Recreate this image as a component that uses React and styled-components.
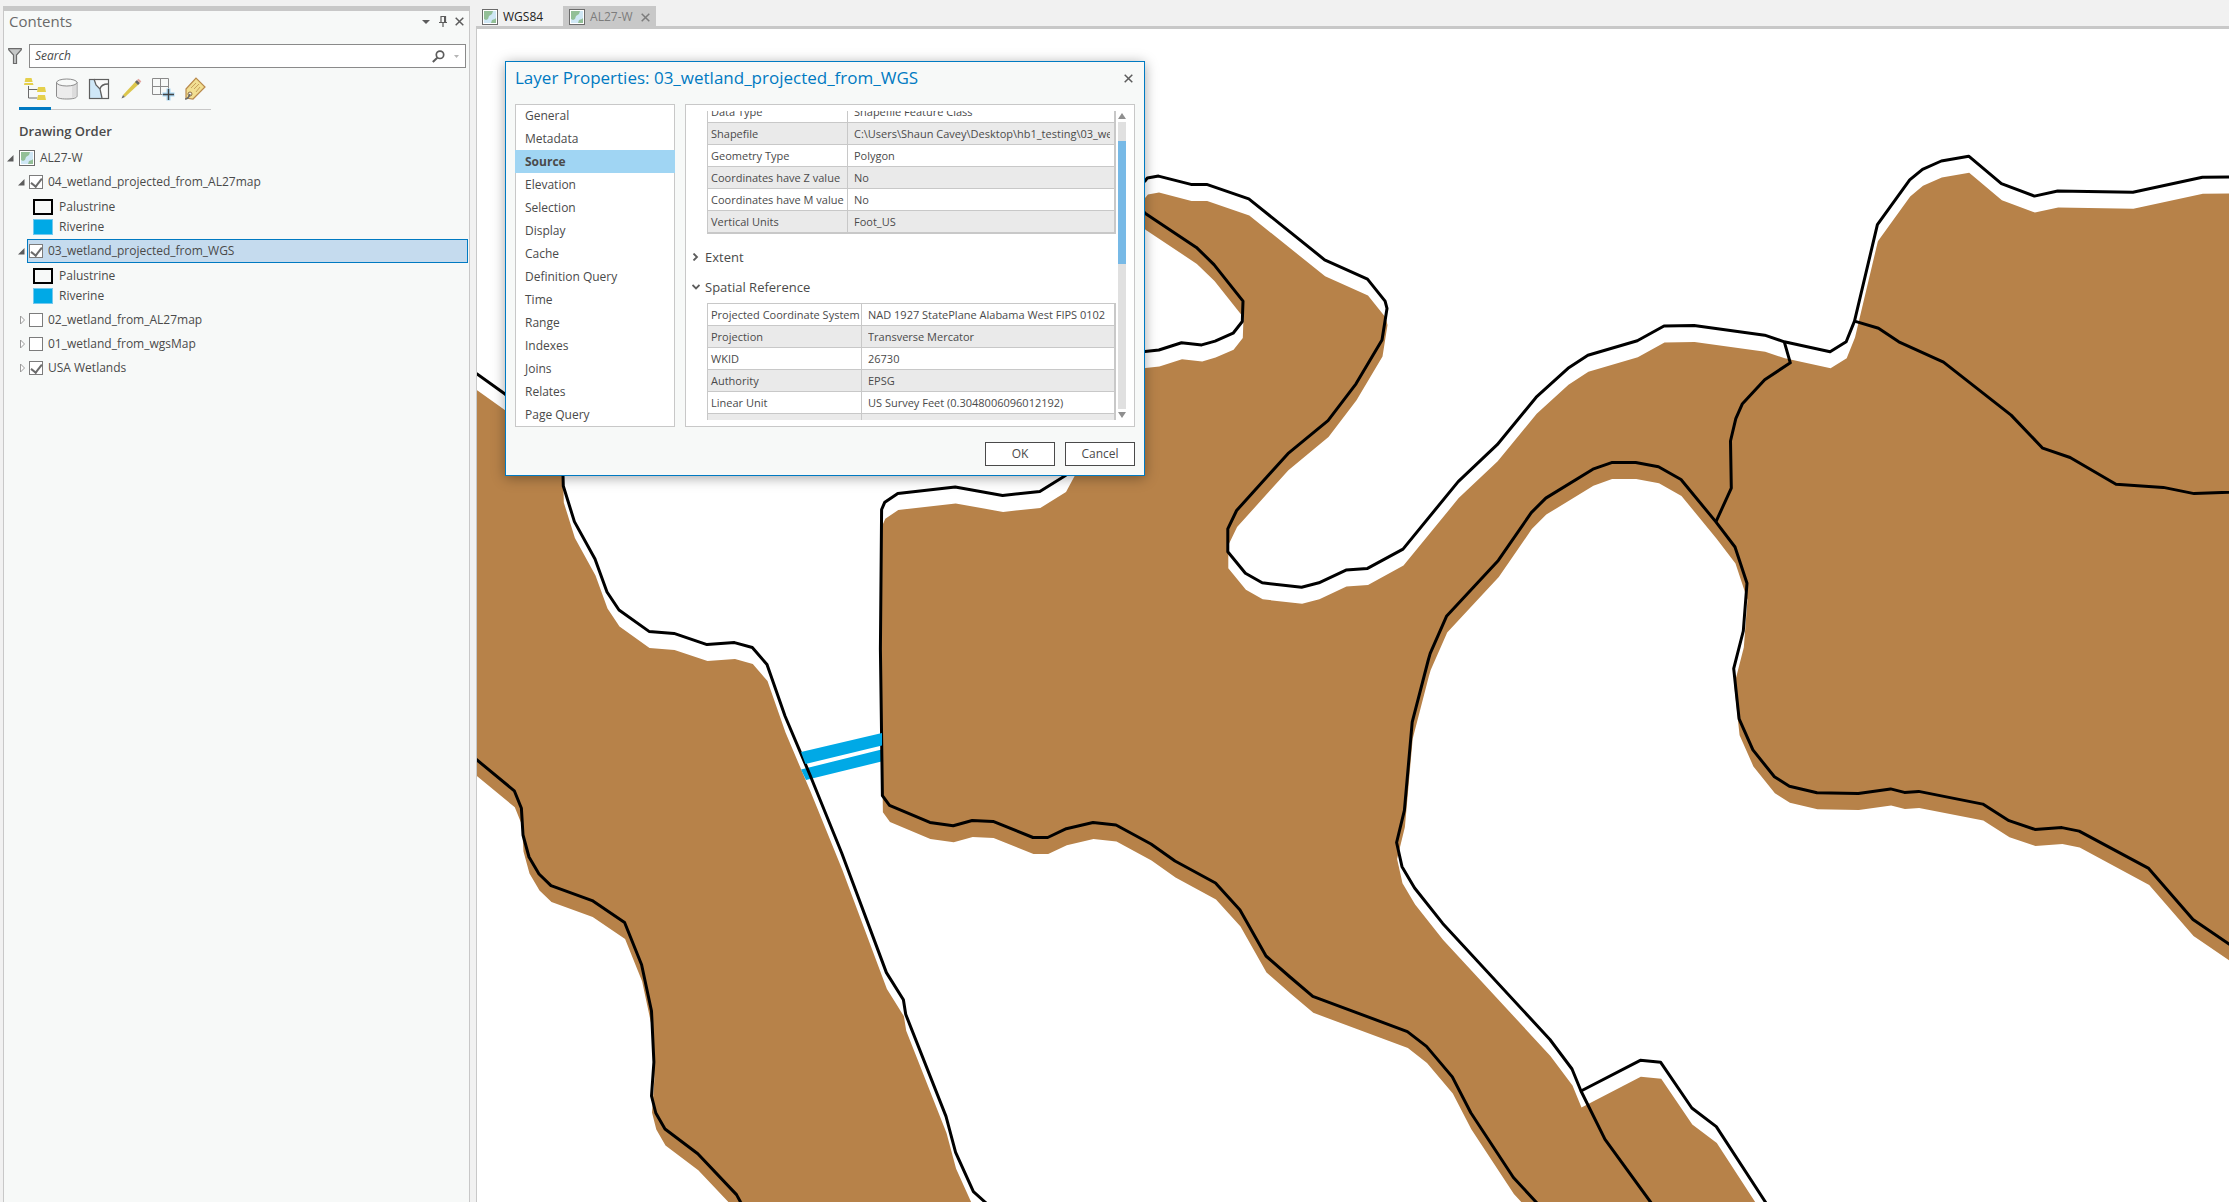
import { useState } from "react";
import styled, { createGlobalStyle } from "styled-components";

const toPoints = (list) => list.map((p) => p.join(",")).join(" ");

const westWetland = [
  [460, 363], [477, 374], [505, 394], [560, 440], [563, 475], [563.3, 486],
  [574.4, 521.6], [595, 559], [607, 592], [619, 610], [649, 631.4], [674, 633.4],
  [707, 644.6], [734.5, 642.6], [752.3, 647.5], [767, 664.5], [785, 716],
  [810, 775], [841.7, 853], [886.4, 972.6], [903.4, 999.8], [905.7, 1014.3],
  [946, 1116.4], [955.6, 1152.3], [973.4, 1191.7], [985, 1202], [1003, 1220],
  [752, 1220], [740.5, 1202], [736.5, 1194.6], [697.8, 1153.8], [665, 1129],
  [655.8, 1113], [651.5, 1096], [653.9, 1062], [651.5, 1011], [641.6, 964.8],
  [624.6, 922.5], [592.2, 900.6], [551, 885.6], [539, 874], [529, 857],
  [523, 835], [521.4, 808.3], [514.3, 790.8], [477, 760], [460, 746],
];

const mainWetland = [
  [1065.5, 475.5], [1039.8, 491.5], [1002.6, 495.4], [955.2, 487], [897.8, 493.4],
  [884.8, 502.2], [881.6, 509.5], [880.4, 649], [882.4, 795.7], [889.5, 805.4],
  [929.9, 822.4], [953.2, 825.8], [972.2, 820.5], [993.1, 821.4], [1033, 837.5],
  [1047.7, 837.5], [1066.3, 828.7], [1093, 822.5], [1116, 825], [1151, 844],
  [1175, 861], [1215.5, 883], [1240, 910], [1266, 956], [1290, 977],
  [1312.8, 996.3], [1407.4, 1031.6], [1426.5, 1046.4], [1452.3, 1076.9],
  [1470.8, 1112.8], [1513.4, 1177.5], [1536, 1202], [1553, 1220], [1777, 1220],
  [1765.4, 1202], [1716.3, 1126.6], [1691.8, 1108], [1660.7, 1062.3],
  [1640.3, 1060.3], [1581, 1091], [1572, 1069], [1549.9, 1039.5],
  [1442.7, 923.4], [1414.6, 888], [1402, 866.7], [1396.6, 842.5],
  [1404.4, 810.4], [1412.2, 722.2], [1428.3, 660], [1430.2, 653.4],
  [1446.7, 615.9], [1498.3, 560.4], [1531.3, 512.6], [1545.8, 498.1],
  [1592.9, 469.2], [1611.6, 462.6], [1635.7, 462.6], [1658.5, 466.8],
  [1681, 479.5], [1715.9, 521.9], [1735, 547], [1747, 583.2], [1743.3, 631],
  [1733.7, 668.6], [1739.1, 718.8], [1752.9, 749.9], [1774.4, 776.8],
  [1789.4, 786.2], [1817, 792.7], [1858.3, 793.4], [1890.6, 788.9],
  [1904.4, 792.4], [1918.7, 791.4], [1982.8, 804.1], [2009, 820.7],
  [2034.9, 829.4], [2061.9, 827.6], [2079.2, 831.1], [2148.7, 868.4],
  [2193, 919.6], [2229, 944], [2260, 966], [2260, 176.8], [2202.4, 177.2],
  [2132.9, 192.3], [2057.7, 191], [2034.4, 196.1], [2001.4, 183.7],
  [1968.7, 156.2], [1941.3, 161], [1922.5, 169.3], [1909.7, 179.9],
  [1877.4, 224.7], [1854.5, 321.1], [1846.2, 341.8], [1830.1, 351.8],
  [1784.3, 341.8], [1764.7, 335.2], [1694.1, 325.6], [1664, 326],
  [1637.3, 340.7], [1587.9, 355.2], [1568, 368.3], [1536.2, 397.2],
  [1497.2, 444.7], [1458.2, 481.6], [1403, 549.1], [1367.5, 568.4],
  [1346, 570.1], [1318.9, 582.8], [1301.6, 587.3], [1262.2, 582.8],
  [1245.4, 573.2], [1227.8, 551.8], [1227.8, 528.8], [1236.6, 510.5],
  [1287.9, 453.7], [1328, 420.6], [1356, 383.8], [1382, 340.1], [1387, 308.4],
  [1385.1, 301.1], [1367.5, 279.1], [1324.6, 259.8], [1248.8, 198.9],
  [1206.7, 184.4], [1191, 184.4], [1158.5, 176.1], [1147.4, 177.9],
  [1145, 181], [1130, 195], [1145, 213.3], [1196.4, 247.4], [1214, 264.6],
  [1243, 301.1], [1242.3, 321.5], [1233.1, 333.2], [1215.1, 341.1],
  [1201.7, 344.9], [1181.5, 342.8], [1158.9, 350], [1145, 351.4],
  [1100, 370], [1083, 443],
];

const innerBorders = [
  [
    [1784.3, 341.8], [1790.3, 362.8], [1764.7, 379.7], [1742.2, 404.1],
    [1735.8, 418.6], [1730.5, 441], [1731.3, 488.1], [1715.9, 521.9],
  ],
  [
    [1854.5, 321.1], [1878.5, 328.3], [1898.8, 341.8], [1943.5, 362.1],
    [2011.1, 415.1], [2042.7, 448.2], [2070.1, 457.5], [2116, 484.3],
    [2163.3, 487.4], [2194.1, 493.6], [2229, 492.3], [2250, 491],
  ],
  [[1581, 1091], [1605, 1139.4], [1650.5, 1202], [1664, 1220]],
];

const layers = [
  { name: "04_wetland_projected_from_AL27map", checked: true, open: true },
  { name: "03_wetland_projected_from_WGS", checked: true, open: true, selected: true },
  { name: "02_wetland_from_AL27map" },
  { name: "01_wetland_from_wgsMap" },
  { name: "USA Wetlands", checked: true },
];

const pages = [
  "General", "Metadata", "Source", "Elevation", "Selection", "Display", "Cache",
  "Definition Query", "Time", "Range", "Indexes", "Joins", "Relates", "Page Query",
];

const dataSource = [
  ["Data Type", "Shapefile Feature Class"],
  ["Shapefile", "C:\\Users\\Shaun Cavey\\Desktop\\hb1_testing\\03_wetland_projected_from_WGS.shp"],
  ["Geometry Type", "Polygon"],
  ["Coordinates have Z value", "No"],
  ["Coordinates have M value", "No"],
  ["Vertical Units", "Foot_US"],
];

const spatialReference = [
  ["Projected Coordinate System", "NAD 1927 StatePlane Alabama West FIPS 0102"],
  ["Projection", "Transverse Mercator"],
  ["WKID", "26730"],
  ["Authority", "EPSG"],
  ["Linear Unit", "US Survey Feet (0.3048006096012192)"],
  ["", ""],
];

const MapIcon = () => (
  <svg width="16" height="16" viewBox="0 0 16 16" aria-hidden="true">
    <rect x="0.5" y="0.5" width="15" height="15" fill="#fff" stroke="#6b6b6b" />
    <rect x="2" y="2" width="12" height="12" fill="#cfe7f5" />
    <path d="M2 2h9l-1 3-3 2-1 3-2 1-2-1z" fill="#93bf97" />
    <path d="M14 9v5h-5l1-3 3-1z" fill="#93bf97" />
  </svg>
);

const CloseIcon = ({ size = 9, color = "#5c5c5c" }) => (
  <svg width={size} height={size} viewBox="0 0 9 9" aria-hidden="true">
    <path d="M0.7 0.7l7.6 7.6M8.3 0.7L0.7 8.3" stroke={color} strokeWidth="1.5" fill="none" />
  </svg>
);

const toolIcons = [
  {
    label: "List By Drawing Order",
    art: (
      <>
        <path d="M5.5 9v12h9M5.500 12.500h9" stroke="#6b6b6b" fill="none" />
        <path d="M2.500 1h6l2 7H1zM15 10h7l1 5h-9zM15 18h7l1 5h-9z" fill="#e5d04c" />
        <path d="M1 5.500h10" stroke="#f7f9f8" />
      </>
    ),
  },
  {
    label: "List By Source",
    art: (
      <>
        <path d="M1.500 5v14c0 2 4 3 10.300 3s10.200-1 10.200-3V5" fill="#ececec" stroke="#8c8c8c" />
        <path d="M17 8v13l4.500-2V6z" fill="#dcdcdc" />
        <ellipse cx="11.800" cy="5.500" rx="10.200" ry="3.500" fill="#f7f9f8" stroke="#8c8c8c" />
      </>
    ),
  },
  {
    label: "List By Selection",
    art: (
      <>
        <rect x="2.500" y="2.500" width="19" height="19" fill="#fafafa" />
        <path d="M3 3h4l2 6 4 3 2 9H3z" fill="#cfe7f7" />
        <path d="M7 2l2 6 4 4 2 9M13 12c1-4 4-5 8-5" stroke="#5f5f5f" strokeWidth="1.300" fill="none" />
        <rect x="2.500" y="2.500" width="19" height="19" fill="none" stroke="#5f5f5f" strokeWidth="1.200" />
      </>
    ),
  },
  {
    label: "List By Editing",
    art: (
      <>
        <path d="M4 18L17 4l3 3L6 20z" fill="#dcc64c" />
        <path d="M2.500 21.500L4 18l2 2z" fill="#6b6b6b" />
        <path d="M16 5l2-2 3 3-2 2z" fill="#666" />
        <path d="M18 3l1.500-1.300 2.800 2.500L21 6z" fill="#e3a29b" />
      </>
    ),
  },
  {
    label: "List By Snapping",
    art: (
      <>
        <path d="M1.500 1.500h16v16h-16zM9.500 1.500v16M1.500 9.500h16" stroke="#8a8a8a" fill="none" />
        <path d="M17.500 11.500v12M11.500 17.500h12" stroke="#a9d7f3" strokeWidth="4" />
        <path d="M17.500 12v11M12 17.500h11" stroke="#444" strokeWidth="1.400" />
      </>
    ),
  },
  {
    label: "List By Labeling",
    art: (
      <>
        <path d="M3 12L13 1l9 9-12 12-7-1z" fill="#f2df92" stroke="#b98a4c" strokeWidth="1.200" />
        <path d="M8 11l5-5M11 12l5-5M13 15l4-5" stroke="#c9a25f" />
        <circle cx="7" cy="17" r="2" fill="#f7f9f8" stroke="#8a6a3c" />
        <path d="M7 17c-1 3-2 5-5 5" stroke="#6b6b6b" strokeWidth="1.500" fill="none" />
      </>
    ),
  },
];

const GridTable = ({ rows, split }) => (
  <Table>
    <colgroup>
      <Column $width={split} />
      <col />
    </colgroup>
    <tbody>
      {rows.map(([key, value]) => (
        <tr key={key}>
          <th scope="row">{key}</th>
          <td>
            <span>{value}</span>
          </td>
        </tr>
      ))}
    </tbody>
  </Table>
);

const ContentsPane = () => {
  const [checks, setChecks] = useState(layers.map((l) => Boolean(l.checked)));
  const toggle = (i) => setChecks(checks.map((c, k) => (k === i ? !c : c)));

  return (
    <Pane>
      <PaneHeader>
        <h2>Contents</h2>
        <IconButton aria-label="Menu">
          <svg width="8" height="4" viewBox="0 0 8 4"><path d="M0 0h8L4 4z" fill="#5c5c5c" /></svg>
        </IconButton>
        <IconButton aria-label="Auto hide">
          <svg width="8" height="11" viewBox="0 0 8 11">
            <path d="M2 0.500h4.500v6M2 0v6.500M0 6.500h8M4 7v4" stroke="#5c5c5c" strokeWidth="1.200" fill="none" />
            <path d="M5.500 1v5" stroke="#5c5c5c" />
          </svg>
        </IconButton>
        <IconButton aria-label="Close">
          <CloseIcon />
        </IconButton>
      </PaneHeader>
      <SearchRow>
        <svg width="14" height="17" viewBox="0 0 14 17" aria-hidden="true">
          <path d="M0.700 0.700h12.600v1L8.500 7v8.500h-3V7L0.700 1.700z" fill="#c6c8c8" stroke="#6b6b6b" strokeWidth="1.200" />
        </svg>
        <SearchBox>
          <input type="text" placeholder="Search" aria-label="Search" />
          <svg width="13" height="13" viewBox="0 0 13 13" aria-hidden="true">
            <circle cx="8" cy="4.800" r="3.700" fill="none" stroke="#5c5c5c" strokeWidth="1.700" />
            <path d="M5.300 7.700L0.800 12" stroke="#5c5c5c" strokeWidth="2" />
          </svg>
          <svg width="5" height="3" viewBox="0 0 5 3" aria-hidden="true"><path d="M0 0h5L2.500 3z" fill="#b5b5b5" /></svg>
        </SearchBox>
      </SearchRow>
      <ToolRow>
        {toolIcons.map((tool, i) => (
          <Tool key={tool.label} aria-label={tool.label} $active={i === 0}>
            <svg width="24" height="24" viewBox="0 0 24 24">{tool.art}</svg>
          </Tool>
        ))}
      </ToolRow>
      <h3>Drawing Order</h3>
      <Root>
        <Expander open />
        <MapIcon />
        AL27-W
      </Root>
      {layers.map((layer, i) => (
        <div key={layer.name}>
          <LayerRow>
            <Expander open={layer.open} />
            <LayerLabel $selected={layer.selected}>
              <Check type="checkbox" checked={checks[i]} onChange={() => toggle(i)} />
              {layer.name}
            </LayerLabel>
          </LayerRow>
          {layer.open && (
            <Legend>
              <li><Swatch $fill="#f7f9f8" $line="#000" $weight="2px" />Palustrine</li>
              <li><Swatch $fill="#00a9e6" $line="#73c8ee" $weight="1px" />Riverine</li>
            </Legend>
          )}
        </div>
      ))}
    </Pane>
  );
};

const Expander = ({ open }) => (
  <ExpandButton aria-label={open ? "Collapse" : "Expand"}>
    {open ? (
      <svg width="7" height="7" viewBox="0 0 7 7"><path d="M6.500 0v6.500H0z" fill="#5c5c5c" /></svg>
    ) : (
      <svg width="7" height="10" viewBox="0 0 7 10">
        <path d="M2.500 1v8l4-4z" fill="#fff" stroke="#9a9a9a" />
      </svg>
    )}
  </ExpandButton>
);

const MapCanvas = () => (
  <svg viewBox="477 29 1752 1173" preserveAspectRatio="xMinYMin slice" role="img" aria-label="Map">
    <g transform="translate(0.5 16.5)" fill="#b78249">
      <polygon points={toPoints(westWetland)} />
      <polygon points={toPoints(mainWetland)} />
    </g>
    <polygon points="801,769.500 881.500,749.500 881.500,761.500 806,780" fill="#00a9e6" />
    <g fill="none" stroke="#000" strokeWidth="3" strokeLinejoin="round">
      <polygon points={toPoints(westWetland)} />
      <polygon points={toPoints(mainWetland)} />
      {innerBorders.map((line, i) => (
        <polyline key={i} points={toPoints(line)} />
      ))}
    </g>
    <polygon points="801,752 882,733 882,745.500 805.500,764" fill="#00a9e6" />
  </svg>
);

const LayerProperties = () => (
  <Dialog role="dialog" aria-label="Layer Properties">
    <DialogHeader>
      <h1>Layer Properties: 03_wetland_projected_from_WGS</h1>
      <IconButton aria-label="Close">
        <CloseIcon />
      </IconButton>
    </DialogHeader>
    <DialogBody>
      <PageList>
        {pages.map((page) => (
          <PageItem key={page} $active={page === "Source"}>{page}</PageItem>
        ))}
      </PageList>
      <Sheet>
        <Scroller>
          <Sections>
            <GridTable rows={dataSource} split={139} />
            <SectionTitle $gap="12px">
              <svg width="8" height="8" viewBox="0 0 8 8"><path d="M1.500 0.500L5 4 1.500 7.500" stroke="#5c5c5c" strokeWidth="1.800" fill="none" /></svg>
              Extent
            </SectionTitle>
            <SectionTitle $gap="8px">
              <svg width="8" height="8" viewBox="0 0 8 8"><path d="M0.500 2L4 5.500 7.500 2" stroke="#5c5c5c" strokeWidth="1.800" fill="none" /></svg>
              Spatial Reference
            </SectionTitle>
            <GridTable rows={spatialReference} split={153} />
          </Sections>
        </Scroller>
        <ScrollBar>
          <svg width="8" height="6" viewBox="0 0 8 6"><path d="M4 0l4 6H0z" fill="#8f8f8f" /></svg>
          <Track>
            <Thumb />
          </Track>
          <svg width="8" height="6" viewBox="0 0 8 6"><path d="M4 6l4-6H0z" fill="#8f8f8f" /></svg>
        </ScrollBar>
      </Sheet>
    </DialogBody>
    <DialogFooter>
      <Button>OK</Button>
      <Button>Cancel</Button>
    </DialogFooter>
  </Dialog>
);

const App = () => {
  return (
    <>
      <GlobalStyle />
      <Page>
        <ContentsPane />
        <View>
          <Tabs>
            <Tab>
              <MapIcon />
              WGS84
            </Tab>
            <Tab $muted>
              <MapIcon />
              AL27-W
              <CloseIcon color="#7c7c7c" />
            </Tab>
          </Tabs>
          <MapArea>
            <MapCanvas />
            <LayerProperties />
          </MapArea>
        </View>
      </Page>
    </>
  );
};

const GlobalStyle = createGlobalStyle`
  * {
    box-sizing: border-box;
  }
  body {
    margin: 0;
    background: #f1f1f1;
    color: #4a4a4a;
    font: 12px/16px "Open Sans", "Noto Sans", sans-serif;
  }
  h1, h2, h3, ul {
    margin: 0;
    padding: 0;
    font-weight: 400;
    list-style: none;
  }
  button {
    font: inherit;
    color: inherit;
    cursor: pointer;
  }
  svg {
    display: block;
    flex: none;
  }
`;

const Page = styled.div`
  display: flex;
  gap: 6px;
  height: 100vh;
  overflow: hidden;
  padding: 6px 0 0 3px;
`;

const Pane = styled.aside`
  flex: none;
  width: 467px;
  border: 1px solid #c8c8c8;
  border-top-width: 5px;
  border-bottom: none;
  background: #f7f9f8;

  h3 {
    margin: 10px 0 4px 15px;
    font-size: 13px;
    line-height: 22px;
    font-weight: 600;
  }
`;

const PaneHeader = styled.header`
  display: flex;
  align-items: center;
  gap: 8px;
  height: 21px;
  padding: 0 5px;

  h2 {
    flex: 1;
    font-size: 15px;
    line-height: 21px;
    color: #6a6a6a;
  }
`;

const IconButton = styled.button`
  display: grid;
  place-items: center;
  min-width: 9px;
  height: 12px;
  padding: 0;
  border: none;
  background: none;
`;

const SearchRow = styled.div`
  display: flex;
  align-items: center;
  gap: 7px;
  margin: 12px 3px 0 4px;
`;

const SearchBox = styled.div`
  flex: 1;
  display: flex;
  align-items: center;
  gap: 9px;
  height: 24px;
  padding: 0 6px 0 5px;
  border: 1px solid #8a8a8a;
  background: #fff;

  input {
    flex: 1;
    padding: 0;
    border: none;
    outline: none;
    font: inherit;
  }
  input::placeholder {
    color: #4a4a4a;
    font-style: italic;
  }
`;

const ToolRow = styled.div`
  display: flex;
  margin: 8px 0 0 15px;
`;

const Tool = styled.button`
  display: grid;
  justify-items: center;
  width: 32px;
  height: 34px;
  padding: 1px 0 0;
  border: none;
  background: none;
  box-shadow: inset 0 ${({ $active }) => ($active ? "-3px #007ac2" : "-1px #c8c8c8")};
`;

const Root = styled.div`
  display: flex;
  align-items: center;
  gap: 5px;
  height: 24px;
  padding-left: 3px;
`;

const ExpandButton = styled.button`
  flex: none;
  display: grid;
  place-items: center;
  width: 7px;
  height: 16px;
  padding: 0;
  border: none;
  background: none;
`;

const LayerRow = styled.div`
  display: flex;
  align-items: center;
  gap: 2px;
  padding: 0 1px 0 14px;
`;

const LayerLabel = styled.label`
  flex: 1;
  display: flex;
  align-items: center;
  gap: 5px;
  height: 24px;
  padding-left: 1px;
  border: 1px solid ${({ $selected }) => ($selected ? "#007ac2" : "transparent")};
  background: ${({ $selected }) => ($selected ? "#c5dbee" : "transparent")};
`;

const Check = styled.input`
  appearance: none;
  display: grid;
  place-items: center;
  width: 14px;
  height: 14px;
  margin: 0;
  border: 1px solid #7c7c7c;
  background: #fff;

  &:checked::after {
    content: "";
    width: 5px;
    height: 9px;
    margin-bottom: 2px;
    border: solid #6b6b6b;
    border-width: 0 2px 2px 0;
    transform: rotate(38deg);
  }
`;

const Legend = styled.ul`
  padding: 3px 0 2px 29px;

  li {
    display: flex;
    align-items: center;
    gap: 6px;
    height: 20px;
  }
`;

const Swatch = styled.span`
  width: 20px;
  height: 16px;
  border: ${({ $weight, $line }) => `${$weight} solid ${$line}`};
  background: ${({ $fill }) => $fill};
`;

const View = styled.main`
  flex: 1;
  min-width: 0;
  display: flex;
  flex-direction: column;
`;

const Tabs = styled.div`
  display: flex;
  height: 20px;
`;

const Tab = styled.button`
  display: flex;
  align-items: center;
  gap: 5px;
  padding: 2px 6px 0;
  border: none;
  background: ${({ $muted }) => ($muted ? "#c8c8c8" : "none")};
  color: ${({ $muted }) => ($muted ? "#7c7c7c" : "#222")};

  & + & {
    margin-left: 14px;
    width: 93px;
  }
  svg:last-child:not(:first-child) {
    margin-left: auto;
  }
`;

const MapArea = styled.div`
  position: relative;
  flex: 1;
  min-height: 0;
  border-top: 3px solid #c8c8c8;
  border-left: 1px solid #c8c8c8;
  background: #fff;

  > svg {
    width: 100%;
    height: 100%;
  }
`;

/* floats over the map */
const Dialog = styled.section`
  position: absolute;
  left: 28px;
  top: 32px;
  width: 640px;
  padding: 0 9px 9px;
  border: 1px solid #007ac2;
  background: #f7f9f8;
  box-shadow: 0 2px 12px rgba(0, 0, 0, 0.35);
`;

const DialogHeader = styled.header`
  display: flex;
  align-items: center;
  height: 42px;
  padding: 0 2px 10px 0;

  h1 {
    flex: 1;
    font-size: 17px;
    line-height: 24px;
    color: #007ac2;
  }
`;

const DialogBody = styled.div`
  display: flex;
  gap: 10px;
  height: 323px;
`;

const PageList = styled.ul`
  width: 160px;
  overflow: hidden;
  background: #fff;
  box-shadow: inset 0 0 0 1px #c8c8c8;
`;

const PageItem = styled.li`
  height: 23px;
  padding-left: 10px;
  line-height: 24px;
  font-weight: ${({ $active }) => ($active ? 700 : 400)};
  background: ${({ $active }) => ($active ? "#a0d5f3" : "transparent")};
`;

const Sheet = styled.div`
  flex: 1;
  min-width: 0;
  display: flex;
  gap: 2px;
  padding: 6px 8px 6px 6px;
  border: 1px solid #c8c8c8;
  background: #fff;
`;

const Scroller = styled.div`
  flex: 1;
  min-width: 0;
  overflow: hidden;
`;

const Sections = styled.div`
  margin-top: -11px;
`;

const Table = styled.table`
  width: 409px;
  margin-left: 15px;
  table-layout: fixed;
  border-collapse: separate;
  border-spacing: 0;
  border: solid #c8c8c8;
  border-width: 1px 2px 1px 1px;

  th,
  td {
    height: 22px;
    padding: 0 0 0 3px;
    border-bottom: 1px solid #c8c8c8;
    font-size: 11px;
    line-height: 16px;
    font-weight: 400;
    text-align: left;
    white-space: nowrap;
  }
  td {
    padding: 0 4px 0 6px;
    border-left: 1px solid #c8c8c8;
  }
  td span {
    display: block;
    overflow: hidden;
  }
  tr:nth-child(even) {
    background: #eaeaea;
  }
`;

const Column = styled.col`
  width: ${({ $width }) => $width}px;
`;

const SectionTitle = styled.h3`
  display: flex;
  align-items: center;
  gap: 5px;
  height: 22px;
  margin-top: ${({ $gap }) => $gap};
  font-size: 13px;
  margin-bottom: 0;

  & + table {
    margin-top: 5px;
  }
`;

const ScrollBar = styled.div`
  display: flex;
  flex-direction: column;
  gap: 3px;
  width: 8px;
  padding: 2px 0;
`;

const Track = styled.div`
  flex: 1;
  padding-top: 19px;
  background: #e0e0e0;
`;

const Thumb = styled.div`
  height: 123px;
  background: #77b9e6;
`;

const DialogFooter = styled.footer`
  display: flex;
  justify-content: flex-end;
  gap: 10px;
  padding-top: 15px;
`;

const Button = styled.button`
  width: 70px;
  height: 24px;
  padding: 0;
  border: 1px solid #4a4a4a;
  background: #fff;
`;

export default App;
